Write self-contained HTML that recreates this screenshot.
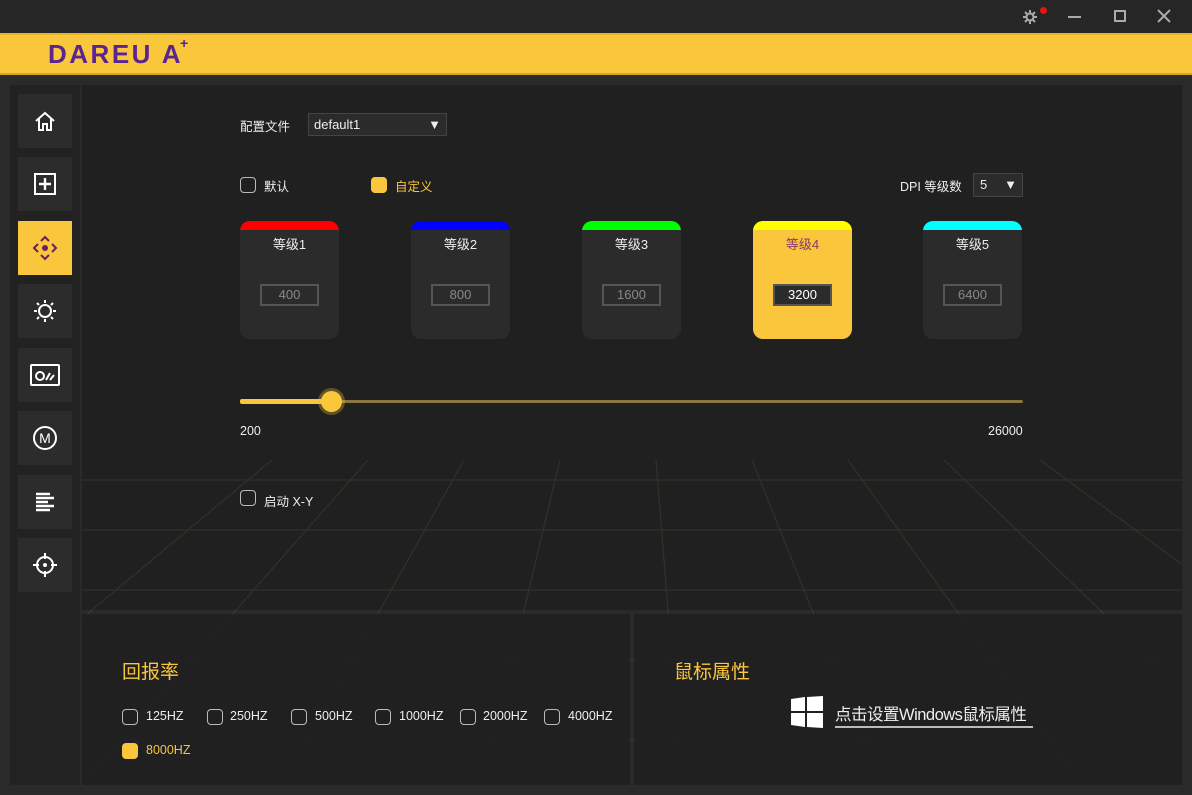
<!DOCTYPE html>
<html><head><meta charset="utf-8">
<style>
*{margin:0;padding:0;box-sizing:border-box}
body{width:1192px;height:795px;overflow:hidden;background:#2a2a2a;font-family:"Liberation Sans","Noto Sans CJK SC",sans-serif;color:#eee;position:relative;font-size:13px}
.a{position:absolute;white-space:nowrap}
.top{left:0;top:0;width:1192px;height:33px;background:#262626}
.band{left:0;top:33px;width:1192px;height:42px;background:#f9c63c;border-top:2px solid #e8b420;border-bottom:2px solid #d9a520}
.side{left:10px;top:85px;width:70px;height:700px;background:#222}
.sb{left:18px;width:54px;height:54px;background:#2c2c2c;display:flex;align-items:center;justify-content:center}
.main{left:82px;top:85px;width:1100px;height:525px;background:#202020}
.bot{top:614px;height:171px;background:#1f1f1f}
.cb{width:16px;height:16px;border:1.5px solid #bbb;border-radius:4px}
.cb.on{background:#f9c63c;border-color:#f9c63c}
.card{top:221px;width:99px;height:118px;background:#2b2b2b;border-radius:10px;overflow:hidden}
.card .bar{height:9px}
.card .t{text-align:center;font-size:13px;margin-top:4px;color:#eee}
.card .v{position:absolute;left:20px;top:63px;width:59px;height:22px;border:2px solid #555;color:#888;text-align:center;font-size:13px;line-height:18px}
.lbl{font-size:12.5px}
.grid{left:82px;top:460px;width:1100px;height:325px;opacity:.12}
</style></head><body>
<div class="a top"></div>
<svg class="a" style="left:1020px;top:8px" width="20" height="18" viewBox="0 0 20 18"><g fill="none" stroke="#aaa" stroke-width="2"><circle cx="10" cy="9" r="3.5"/><path d="M10 2v3M10 13v3M3 9h3M14 9h3M5 4l2 2M13 12l2 2M15 4l-2 2M7 12l-2 2"/></g></svg>
<div class="a" style="left:1040px;top:7px;width:7px;height:7px;border-radius:50%;background:#f01010"></div>
<div class="a" style="left:1068px;top:16px;width:13px;height:2px;background:#aaa"></div>
<div class="a" style="left:1114px;top:10px;width:12px;height:12px;border:2px solid #aaa"></div>
<svg class="a" style="left:1157px;top:9px" width="14" height="14"><path d="M1 1L13 13M13 1L1 13" stroke="#aaa" stroke-width="2"/></svg>
<div class="a band"></div>
<div class="a" style="left:48px;top:39px;font-size:26px;font-weight:bold;color:#5a2590;letter-spacing:2.5px">DAREU A</div>
<div class="a" style="left:180px;top:35px;font-size:14px;font-weight:bold;color:#5a2590">+</div>
<div class="a side"></div>
<div class="a main"></div>
<svg class="a grid" viewBox="0 0 1100 325" preserveAspectRatio="none"><g stroke="#b8a060" stroke-width="1.2" fill="none">
<path d="M550 -300L-200 325M550 -300L0 325M550 -300L200 325M550 -300L400 325M550 -300L600 325M550 -300L800 325M550 -300L1000 325M550 -300L1200 325M550 -300L1400 325"/>
<path d="M0 20H1100M0 70H1100M0 130H1100M0 200H1100M0 280H1100"/></g></svg>
<div class="a bot" style="left:82px;width:548px;opacity:.85"></div>
<div class="a bot" style="left:634px;width:548px;opacity:.85"></div>

<div class="a sb" style="top:94px"><svg width="24" height="22" viewBox="0 0 24 22"><path d="M3 11L12 3L21 11M6 9V20H10V14H14V20H18V9" fill="none" stroke="#fff" stroke-width="2"/></svg></div>
<div class="a sb" style="top:157px"><svg width="22" height="22"><rect x="1" y="1" width="20" height="20" fill="none" stroke="#fff" stroke-width="2"/><path d="M11 5V17M5 11H17" stroke="#fff" stroke-width="2.4"/></svg></div>
<div class="a sb" style="top:221px;background:#f9c63c"><svg width="26" height="26" viewBox="0 0 26 26"><g fill="none" stroke="#6a1f60" stroke-width="2"><path d="M9 6L13 2L17 6M9 20L13 24L17 20M6 9L2 13L6 17M20 9L24 13L20 17"/></g><circle cx="13" cy="13" r="3" fill="#6a1f60"/></svg></div>
<div class="a sb" style="top:284px"><svg width="26" height="26" viewBox="0 0 26 26"><circle cx="13" cy="13" r="6" fill="none" stroke="#fff" stroke-width="2"/><path d="M13 2v3M13 21v3M2 13h3M21 13h3M5 5l2 2M19 19l2 2M21 5l-2 2M7 19l-2 2" stroke="#fff" stroke-width="2"/></svg></div>
<div class="a sb" style="top:348px"><svg width="30" height="22" viewBox="0 0 30 22"><rect x="1" y="1" width="28" height="20" rx="1" fill="none" stroke="#fff" stroke-width="2"/><circle cx="10" cy="12" r="4" fill="none" stroke="#fff" stroke-width="2"/><path d="M16 16L20 9M20 16L24 11" stroke="#fff" stroke-width="2"/></svg></div>
<div class="a sb" style="top:411px"><svg width="26" height="26"><circle cx="13" cy="13" r="11" fill="none" stroke="#fff" stroke-width="2"/><text x="13" y="18" text-anchor="middle" font-size="14" fill="#fff" font-family="Liberation Sans">M</text></svg></div>
<div class="a sb" style="top:475px"><svg width="20" height="20"><path d="M1 2H15M1 6H19M1 10H13M1 14H19M1 18H15" stroke="#fff" stroke-width="2.5"/></svg></div>
<div class="a sb" style="top:538px"><svg width="26" height="26"><circle cx="13" cy="13" r="8" fill="none" stroke="#fff" stroke-width="2"/><circle cx="13" cy="13" r="2" fill="#fff"/><path d="M13 1v6M13 19v6M1 13h6M19 13h6" stroke="#fff" stroke-width="2"/></svg></div>

<div class="a lbl" style="left:240px;top:116px">配置文件</div>
<div class="a" style="left:308px;top:113px;width:139px;height:23px;background:#2b2b2b;border:1px solid #444;padding-left:5px;line-height:21px">default1<span style="position:absolute;right:5px;font-size:13px">▼</span></div>

<div class="a cb" style="left:240px;top:177px"></div><div class="a lbl" style="left:264px;top:176px">默认</div>
<div class="a cb on" style="left:371px;top:177px"></div><div class="a lbl" style="left:395px;top:176px;color:#f9c63c">自定义</div>
<div class="a lbl" style="left:900px;top:176px">DPI 等级数</div>
<div class="a" style="left:973px;top:173px;width:50px;height:24px;background:#2b2b2b;border:1px solid #444;padding-left:6px;line-height:22px">5<span style="position:absolute;right:5px;font-size:13px">▼</span></div>

<div class="a card" style="left:240px"><div class="bar" style="background:#ff0000"></div><div class="t">等级1</div><div class="v">400</div></div>
<div class="a card" style="left:411px"><div class="bar" style="background:#0000ff"></div><div class="t">等级2</div><div class="v">800</div></div>
<div class="a card" style="left:582px"><div class="bar" style="background:#00ff00"></div><div class="t">等级3</div><div class="v">1600</div></div>
<div class="a card" style="left:753px;background:#f9c63c"><div class="bar" style="background:#ffff00"></div><div class="t" style="color:#8a3a6a">等级4</div><div class="v" style="background:#2b2b2b;color:#fff">3200</div></div>
<div class="a card" style="left:923px"><div class="bar" style="background:#00ffff"></div><div class="t">等级5</div><div class="v">6400</div></div>

<div class="a" style="left:240px;top:400px;width:783px;height:3px;background:#8a7640;border-radius:2px"></div>
<div class="a" style="left:240px;top:399px;width:92px;height:5px;background:#f9c63c;border-radius:2px"></div>
<div class="a" style="left:321px;top:391px;width:21px;height:21px;border-radius:50%;background:#f9c63c;box-shadow:0 0 0 3px rgba(249,198,60,.3)"></div>
<div class="a lbl" style="left:240px;top:424px">200</div>
<div class="a lbl" style="left:988px;top:424px">26000</div>
<div class="a cb" style="left:240px;top:490px"></div><div class="a lbl" style="left:264px;top:491px">启动 X-Y</div>

<div class="a" style="left:122px;top:657px;font-size:19px;color:#f9c63c">回报率</div>
<div class="a" style="left:674px;top:657px;font-size:19px;color:#f9c63c">鼠标属性</div>
<div class="a cb" style="left:122px;top:709px"></div><div class="a lbl" style="left:146px;top:709px">125HZ</div>
<div class="a cb" style="left:207px;top:709px"></div><div class="a lbl" style="left:230px;top:709px">250HZ</div>
<div class="a cb" style="left:291px;top:709px"></div><div class="a lbl" style="left:315px;top:709px">500HZ</div>
<div class="a cb" style="left:375px;top:709px"></div><div class="a lbl" style="left:399px;top:709px">1000HZ</div>
<div class="a cb" style="left:460px;top:709px"></div><div class="a lbl" style="left:483px;top:709px">2000HZ</div>
<div class="a cb" style="left:544px;top:709px"></div><div class="a lbl" style="left:568px;top:709px">4000HZ</div>
<div class="a cb on" style="left:122px;top:743px"></div><div class="a lbl" style="left:146px;top:743px;color:#f9c63c">8000HZ</div>

<svg class="a" style="left:791px;top:696px" width="32" height="32" viewBox="0 0 32 32"><path d="M0 3L14 1V15H0ZM16 1L32 0V15H16ZM0 17H14V31L0 29ZM16 17H32V32L16 31Z" fill="#fff"/></svg>
<div class="a" style="left:835px;top:701px;font-size:16.5px;letter-spacing:-0.5px;color:#eee;border-bottom:2px solid #bbb;padding-bottom:1px;width:198px;overflow:visible">点击设置Windows鼠标属性</div>
</body></html>
